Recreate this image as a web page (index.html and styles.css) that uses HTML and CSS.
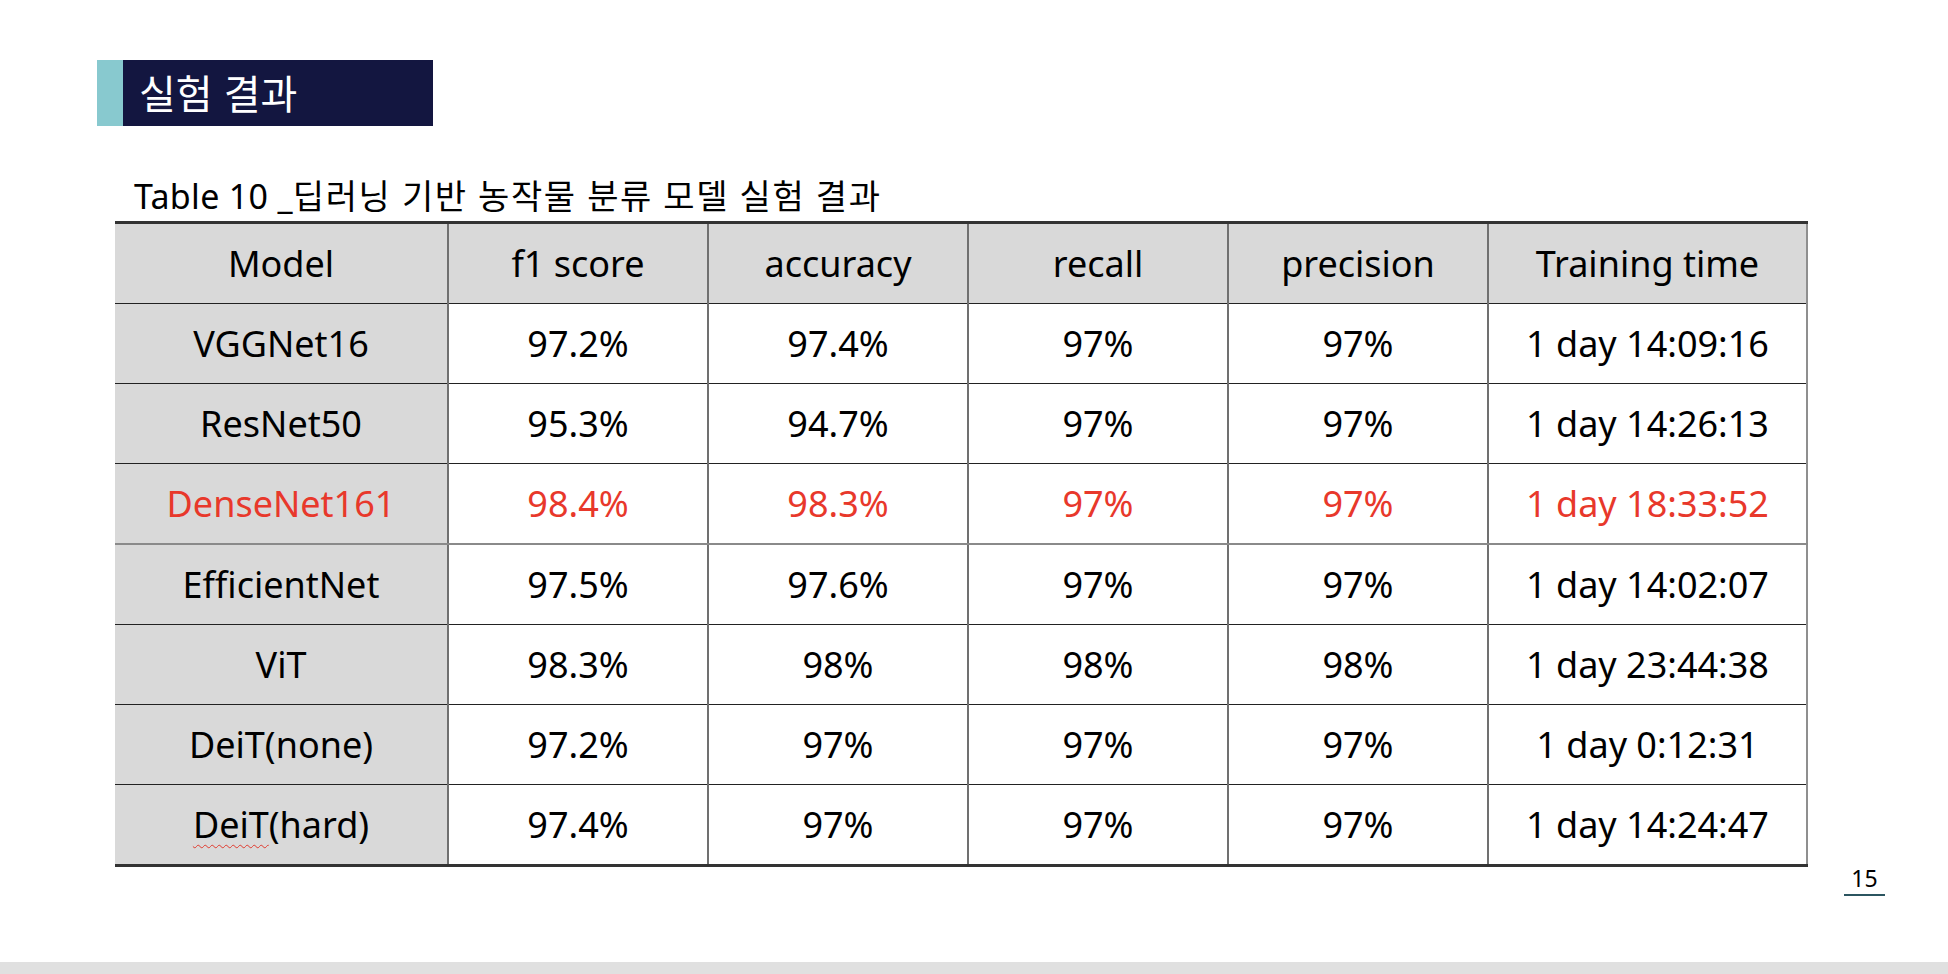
FILE: index.html
```html
<!DOCTYPE html>
<html lang="ko">
<head>
<meta charset="utf-8">
<link rel="stylesheet" href="styles.css">
</head>
<body>
<div class="slide">
  <div class="title-bar">
    <div class="title-accent"></div>
    <div class="title-box">실험 결과</div>
  </div>
  <div class="caption">Table 10 _<span class="ko">딥러닝 기반 농작물 분류 모델 실험 결과</span></div>
  <table class="results">
    <colgroup>
      <col class="c-model"><col class="c-num"><col class="c-num"><col class="c-num"><col class="c-num"><col class="c-time">
    </colgroup>
    <thead>
      <tr><th>Model</th><th>f1 score</th><th>accuracy</th><th>recall</th><th>precision</th><th>Training time</th></tr>
    </thead>
    <tbody>
      <tr><td class="name">VGGNet16</td><td>97.2%</td><td>97.4%</td><td>97%</td><td>97%</td><td>1 day 14:09:16</td></tr>
      <tr><td class="name">ResNet50</td><td>95.3%</td><td>94.7%</td><td>97%</td><td>97%</td><td>1 day 14:26:13</td></tr>
      <tr class="best"><td class="name">DenseNet161</td><td>98.4%</td><td>98.3%</td><td>97%</td><td>97%</td><td>1 day 18:33:52</td></tr>
      <tr><td class="name">EfficientNet</td><td>97.5%</td><td>97.6%</td><td>97%</td><td>97%</td><td>1 day 14:02:07</td></tr>
      <tr><td class="name">ViT</td><td>98.3%</td><td>98%</td><td>98%</td><td>98%</td><td>1 day 23:44:38</td></tr>
      <tr><td class="name">DeiT(none)</td><td>97.2%</td><td>97%</td><td>97%</td><td>97%</td><td>1 day 0:12:31</td></tr>
      <tr><td class="name"><span class="squiggle">DeiT</span>(hard)</td><td>97.4%</td><td>97%</td><td>97%</td><td>97%</td><td>1 day 14:24:47</td></tr>
    </tbody>
  </table>
  <div class="page-num">15</div>
</div>
<div class="bottom-bar"></div>
</body>
</html>
```
FILE: styles.css
```css
html, body {
  margin: 0;
  padding: 0;
  background: #ffffff;
}
body {
  font-family: "Noto Sans", "Noto Sans CJK KR", sans-serif;
  color: #000;
  width: 1948px;
  height: 974px;
  overflow: hidden;
  position: relative;
}
.slide {
  height: 962px;
  padding: 60px 0 0 97px;
  box-sizing: border-box;
  display: flex;
  flex-direction: column;
  position: relative;
}
.title-bar {
  display: flex;
  height: 66px;
  width: 336px;
}
.title-accent {
  width: 26px;
  background: #88c9cf;
}
.title-box {
  flex: 1;
  background: #131640;
  color: #fff;
  font-family: "Noto Sans CJK KR", sans-serif;
  font-size: 40px;
  line-height: 64px;
  padding-left: 16px;
}
.caption {
  margin: 50px 0 0 37px;
  font-family: "Noto Sans", "Noto Sans CJK KR", sans-serif;
  font-size: 34px;
  line-height: 40px;
  height: 45px;
  letter-spacing: 0.3px;
}
.caption .ko {
  letter-spacing: 1.6px;
}
.results {
  margin-left: 18px;
  border-collapse: collapse;
  table-layout: fixed;
  width: 1692px;
  font-size: 36px;
  border-top: 3px solid #333;
  border-bottom: 3px solid #333;
  border-right: 2px solid #8f8f8f;
}
.c-model { width: 333px; }
.c-num { width: 260px; }
.c-time { width: 319px; }
.results th, .results td {
  height: 79px;
  padding: 0;
  text-align: center;
  vertical-align: middle;
  font-weight: normal;
  border-left: 2px solid #707070;
  border-bottom: 1px solid #222;
}
.results th:first-child, .results td:first-child {
  border-left: none;
}
.results th {
  background: #d9d9d9;
}
.results td.name {
  background: #d9d9d9;
}
.results tr.best td {
  color: #e8382b;
  border-bottom: 2px solid #8a8a8a;
}
.squiggle {
  text-decoration: underline wavy #e03a2e;
  text-decoration-thickness: 1px;
  text-underline-offset: 6px;
}
.page-num {
  position: absolute;
  left: 1844px;
  top: 862px;
  width: 41px;
  text-align: center;
  font-size: 23px;
  line-height: 32px;
  border-bottom: 2px solid #2b5560;
}
.bottom-bar {
  position: absolute;
  left: 0;
  bottom: 0;
  width: 100%;
  height: 12px;
  background: #e0e0e0;
}
```
